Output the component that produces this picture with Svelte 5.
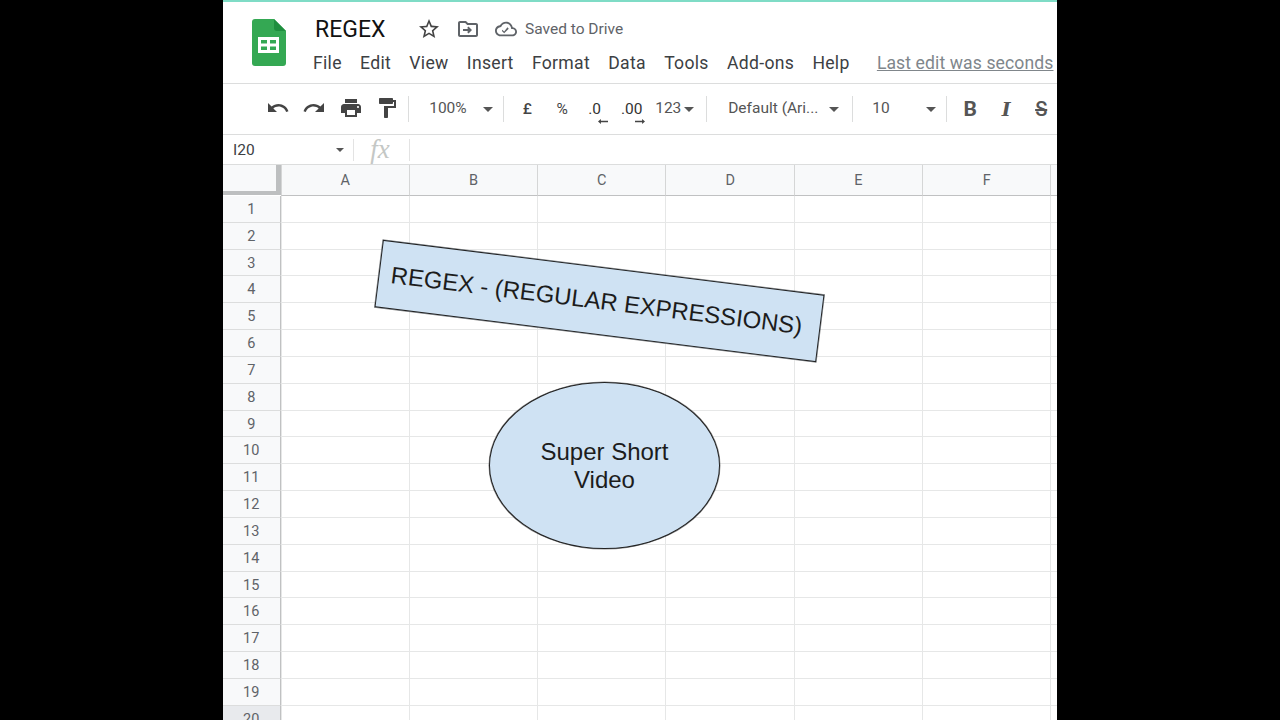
<script>
  const menus = ['File', 'Edit', 'View', 'Insert', 'Format', 'Data', 'Tools', 'Add-ons', 'Help'];
  const cols = ['A', 'B', 'C', 'D', 'E', 'F', ''];
  const rows = Array.from({ length: 19 }, (_, i) => i + 1);
</script>

<div class="sheet">
  <header class="top">
    <svg class="logo" viewBox="0 0 34 47" width="34" height="47">
      <path d="M3 0H22L34 12V44a3 3 0 0 1-3 3H3a3 3 0 0 1-3-3V3a3 3 0 0 1 3-3z" fill="#34a853" />
      <path d="M22 0L34 12H25a3 3 0 0 1-3-3z" fill="#1e8e3e" />
      <path d="M6 18H27V34H6zM9 21V24.5H15V21zM18 21V24.5H24V21zM9 27.5V31H15V27.5zM18 27.5V31H24V27.5z" fill="#fff" fill-rule="evenodd" />
    </svg>
    <div class="titles">
      <div class="title-row">
        <span class="doc-name">REGEX</span>
        <svg class="star" viewBox="0 0 24 24" width="24" height="24"><path d="M22 9.24l-7.19-.62L12 2 9.19 8.63 2 9.24l5.46 4.73L5.82 21 12 17.27 18.18 21l-1.63-7.03L22 9.24zM12 15.4l-3.76 2.27 1-4.28-3.32-2.88 4.38-.38L12 6.1l1.71 4.04 4.38.38-3.32 2.88 1 4.28L12 15.4z" /></svg>
        <svg class="move" viewBox="0 0 24 24" width="24" height="24"><path d="M20 6h-8l-2-2H4c-1.1 0-2 .9-2 2v12c0 1.1.9 2 2 2h16c1.1 0 2-.9 2-2V8c0-1.100-.9-2-2-2zm0 12H4V6h5.200l2 2H20v10zM12.500 9.500l-1.400 1.400 1.100 1.100H7v2h5.200l-1.100 1.100 1.400 1.400 3.500-3.500z" /></svg>
        <svg class="cloud" viewBox="0 0 24 24" width="22" height="22"><path d="M19.35 10.04C18.67 6.59 15.64 4 12 4 9.11 4 6.6 5.64 5.35 8.04 2.34 8.36 0 10.91 0 14c0 3.31 2.69 6 6 6h13c2.76 0 5-2.24 5-5 0-2.64-2.05-4.780-4.650-4.960zM19 18H6c-2.210 0-4-1.790-4-4 0-2.050 1.530-3.760 3.560-3.970l1.070-.11.5-.95C8.080 7.140 9.940 6 12 6c2.620 0 4.880 1.860 5.390 4.430l.3 1.500 1.530.11c1.560.1 2.780 1.410 2.780 2.960 0 1.650-1.350 3-3 3zm-9-3.180l-2.090-2.090L7.500 14.100 10 16.600l5-5-1.410-1.410z" /></svg>
        <span class="saved">Saved to Drive</span>
      </div>
      <nav class="menu">
        {#each menus as m}
          <span>{m}</span>
        {/each}
        <span class="last-edit">Last edit was seconds</span>
      </nav>
    </div>
  </header>

  <div class="toolbar">
    <span class="tool first"><svg viewBox="0 0 24 24"><path d="M12.500 8c-2.650 0-5.050.99-6.900 2.600L2 7v9h9l-3.620-3.620c1.390-1.160 3.160-1.880 5.120-1.880 3.540 0 6.550 2.310 7.600 5.500l2.370-.78C21.080 11.030 17.150 8 12.500 8z" /></svg></span>
    <span class="tool"><svg viewBox="0 0 24 24"><path d="M18.400 10.600C16.550 8.990 14.150 8 11.500 8c-4.650 0-8.580 3.030-9.960 7.220L3.900 16c1.050-3.190 4.050-5.500 7.600-5.500 1.950 0 3.730.72 5.120 1.880L13 16h9V7l-3.600 3.600z" /></svg></span>
    <span class="tool"><svg viewBox="0 0 24 24"><path d="M19 8H5c-1.660 0-3 1.340-3 3v6h4v4h12v-4h4v-6c0-1.660-1.340-3-3-3zm-3 11H8v-5h8v5zm3-7c-.55 0-1-.45-1-1s.45-1 1-1 1 .45 1 1-.45 1-1 1zm-1-9H6v4h12V3z" /></svg></span>
    <span class="tool"><svg viewBox="0 0 24 24"><path d="M18 4V3c0-.55-.45-1-1-1H5c-.55 0-1 .45-1 1v4c0 .55.45 1 1 1h12c.55 0 1-.45 1-1V6h1v4H9v11c0 .55.45 1 1 1h2c.55 0 1-.45 1-1v-9h8V4h-3z" /></svg></span>
    <i class="sep s1"></i>
    <span class="drop zoom-pick">100%</span><i class="caret"></i>
    <i class="sep s2"></i>
    <span class="fmt pound">£</span>
    <span class="fmt percent">%</span>
    <span class="fmt dec">.0<svg viewBox="0 0 12 8" width="10" height="7"><path d="M12 3.200H3.500V1L0 4l3.500 3V4.800H12z" /></svg></span>
    <span class="fmt dec">.00<svg viewBox="0 0 12 8" width="10" height="7"><path d="M0 3.200h8.500V1L12 4 8.500 7V4.800H0z" /></svg></span>
    <span class="drop num">123</span><i class="caret"></i>
    <i class="sep s3"></i>
    <span class="drop font-pick">Default (Ari...</span><i class="caret"></i>
    <i class="sep s4"></i>
    <span class="drop size-pick">10</span><i class="caret"></i>
    <i class="sep s5"></i>
    <span class="style bold">B</span>
    <span class="style ital">I</span>
    <span class="style strike">S</span>
  </div>

  <div class="formula">
    <span class="name-box">I20</span>
    <i class="caret small"></i>
    <i class="fsep a"></i>
    <span class="fx">fx</span>
    <i class="fsep b"></i>
  </div>

  <div class="grid-wrap">
    <div class="grid">
      <div class="corner"></div>
      {#each cols as c}
        <div class="col-head">{c}</div>
      {/each}
      {#each rows as r}
        <div class="row-head">{r}</div>
        {#each cols as c}
          <div class="cell"></div>
        {/each}
      {/each}
      <div class="row-head active"><span>20</span></div>
      {#each cols as c}
        <div class="cell"></div>
      {/each}
    </div>

    <div class="banner">REGEX - (REGULAR EXPRESSIONS)</div>
    <div class="oval">Super Short<br />Video</div>
  </div>
</div>

<style>
  :global(body) {
    margin: 0;
    background: #000;
  }

  .sheet {
    width: 834px;
    height: 720px;
    margin-left: 223px;
    background: #fff;
    overflow: hidden;
    font-family: Roboto, sans-serif;
    color: #3c4043;
    box-sizing: border-box;
    border-top: 2px solid #7fdcc6;
  }

  .top {
    display: flex;
    height: 81px;
    border-bottom: 1px solid #dcdddd;
  }

  .logo {
    flex: none;
    margin: 17px 0 0 29px;
  }

  .titles {
    margin-left: 27px;
    white-space: nowrap;
    min-width: 0;
  }

  .title-row {
    display: flex;
    align-items: center;
    height: 24px;
    margin-top: 15px;
    padding-left: 2px;
  }

  .doc-name {
    font-size: 23px;
    color: #111;
    width: 102px;
  }

  .title-row svg {
    fill: #5f6368;
    flex: none;
  }

  .star {
    fill: #444 !important;
  }

  .move {
    margin-left: 15px;
  }

  .cloud {
    margin-left: 15px;
  }

  .saved {
    margin-left: 8px;
    font-size: 15.5px;
    color: #5f6368;
  }

  .menu {
    display: flex;
    margin-top: 12px;
    font-size: 17.6px;
    color: #3c4043;
    letter-spacing: 0.3px;
  }

  .menu span {
    margin-right: 18.25px;
  }

  .menu .last-edit {
    margin: 0 0 0 9px;
    color: #80868b;
    letter-spacing: 0.1px;
    text-decoration: underline;
  }

  .toolbar {
    display: flex;
    align-items: center;
    height: 50px;
    border-bottom: 1px solid #dcdddd;
    color: #444;
    white-space: nowrap;
  }

  .tool {
    display: flex;
    justify-content: center;
    width: 36.3px;
    flex: none;
    margin-bottom: 2px;
  }

  .tool.first {
    margin-left: 37px;
  }

  .tool svg {
    width: 24px;
    height: 24px;
    fill: #444;
  }

  .sep {
    width: 1px;
    height: 26px;
    background: #dcdddd;
    flex: none;
  }

  .s1 { margin-left: 3px; }
  .s2 { margin-left: 10px; }
  .s3 { margin-left: 12px; }
  .s4 { margin-left: 13px; }
  .s5 { margin-left: 10px; }

  .caret {
    width: 0;
    height: 0;
    border-left: 5.5px solid transparent;
    border-right: 5.5px solid transparent;
    border-top: 5.5px solid #555;
    flex: none;
  }

  .drop {
    font-size: 15.5px;
    color: #555;
    flex: none;
    margin-bottom: 3px;
  }

  .zoom-pick { margin-left: 20px; width: 54px; }
  .num { margin-left: 5px; width: 29px; }
  .font-pick { margin-left: 21px; width: 101px; }
  .size-pick { margin-left: 19px; width: 54px; }

  .fmt {
    position: relative;
    flex: none;
    font-size: 15.5px;
    text-align: center;
    color: #444;
    width: 36px;
  }

  .pound { margin-left: 5px; font-weight: 500; }
  .percent { width: 28px; margin-left: 3px; }

  .dec {
    width: 37px;
    color: #333;
  }

  .dec svg {
    position: absolute;
    left: 22px;
    top: 18px;
    fill: #444;
  }

  .style {
    flex: none;
    width: 36px;
    text-align: center;
    font-size: 21px;
    color: #555;
  }

  .bold { margin-left: 5px; font-weight: 700; }
  .ital { font-family: "DejaVu Serif", serif; font-style: italic; font-weight: 700; font-size: 19px; }
  .strike { text-decoration: line-through; font-weight: 500; font-size: 20px; margin-left: -1px; }

  .formula {
    display: flex;
    align-items: center;
    height: 29px;
    border-bottom: 1px solid #dcdddd;
  }

  .name-box {
    margin-left: 10px;
    width: 103px;
    font-size: 15.5px;
    color: #3c4043;
  }

  .caret.small {
    border-left-width: 4px;
    border-right-width: 4px;
    border-top-width: 4px;
  }

  .fsep {
    width: 1px;
    height: 22px;
    background: #e3e3e3;
    flex: none;
  }

  .fsep.a { margin-left: 9px; }

  .fx {
    flex: none;
    box-sizing: border-box;
    width: 55px;
    padding-right: 3px;
    text-align: center;
    font-family: "Liberation Serif", serif;
    font-style: italic;
    font-size: 27px;
    color: #c4c7c5;
  }

  .grid-wrap {
    position: relative;
  }

  .grid {
    display: grid;
    grid-template-columns: 57.5px repeat(6, 128.33px) 30px;
    grid-template-rows: 31px repeat(20, 26.83px);
    font-size: 14.5px;
    color: #5f6368;
  }

  .corner {
    background: #f8f9fa;
    box-sizing: border-box;
    border-right: 5px solid #bdbfc0;
    border-bottom: 4px solid #bdbfc0;
    margin-bottom: 1px;
  }

  .col-head,
  .row-head {
    display: flex;
    align-items: center;
    justify-content: center;
    background: #f8f9fa;
    box-sizing: border-box;
  }

  .col-head {
    border-left: 1px solid #d5d6d6;
    border-bottom: 1px solid #c0c1c2;
  }

  .row-head {
    padding-top: 1px;
    border-right: 1px solid #c0c1c2;
    border-bottom: 1px solid #dcdddd;
  }

  .row-head.active {
    background: #e8eaed;
    align-items: flex-start;
    padding-top: 5px;
    height: 15px;
    overflow: hidden;
  }

  .cell {
    box-sizing: border-box;
    border-left: 1px solid #e6e7e7;
    border-bottom: 1px solid #e6e7e7;
  }

  .banner,
  .oval {
    position: absolute;
    box-sizing: border-box;
    display: flex;
    align-items: center;
    justify-content: center;
    background: #cfe2f3;
    border: 1px solid #222;
    box-shadow: 0 0 0 0.5px rgba(0, 0, 0, 0.45);
    color: #1c1c1c;
    font-family: "Liberation Sans", sans-serif;
    font-size: 24px;
    text-align: center;
    white-space: nowrap;
  }

  .banner {
    left: 154px;
    top: 102px;
    width: 445px;
    height: 68px;
    padding-right: 6px;
    font-size: 23.9px;
    transform: rotate(7.1deg);
  }

  .oval {
    left: 266px;
    top: 217px;
    width: 231px;
    height: 167px;
    border-radius: 50%;
    line-height: 28px;
  }
</style>
